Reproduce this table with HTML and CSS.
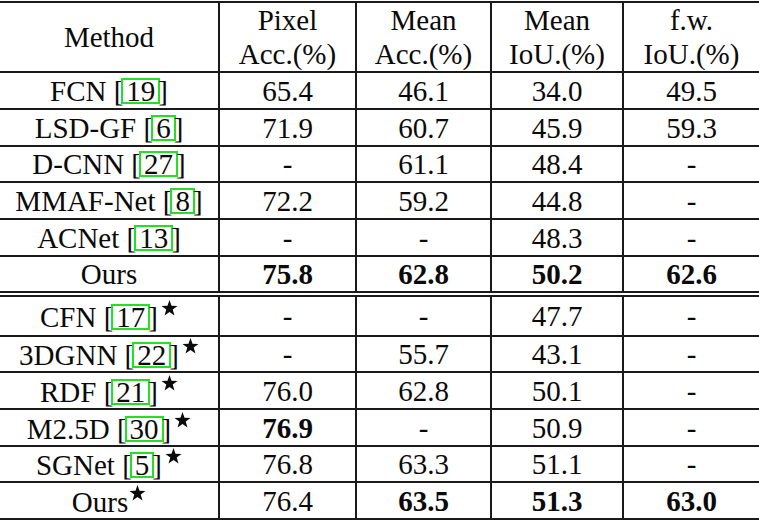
FILE: index.html
```html
<!DOCTYPE html>
<html>
<head>
    <title>Resultados de segmentación</title>
    <link rel="stylesheet" href="styles.css">
</head>
<body>
    <table class="results">
        <colgroup>
            <col class="c-method">
            <col class="c-pix">
            <col class="c-macc">
            <col class="c-miou">
            <col class="c-fw">
        </colgroup>
        <tr class="head">
            <th>Method</th>
            <th>Pixel<br>Acc.(%)</th>
            <th>Mean<br>Acc.(%)</th>
            <th>Mean<br>IoU.(%)</th>
            <th>f.w.<br>IoU.(%)</th>
        </tr>
        <tr>
            <td>FCN [<span class="ref">19</span>]</td>
            <td>65.4</td><td>46.1</td><td>34.0</td><td>49.5</td>
        </tr>
        <tr>
            <td>LSD-GF [<span class="ref">6</span>]</td>
            <td>71.9</td><td>60.7</td><td>45.9</td><td>59.3</td>
        </tr>
        <tr class="short">
            <td>D-CNN [<span class="ref">27</span>]</td>
            <td>-</td><td>61.1</td><td>48.4</td><td>-</td>
        </tr>
        <tr>
            <td>MMAF-Net [<span class="ref">8</span>]</td>
            <td>72.2</td><td>59.2</td><td>44.8</td><td>-</td>
        </tr>
        <tr>
            <td>ACNet [<span class="ref">13</span>]</td>
            <td>-</td><td>-</td><td>48.3</td><td>-</td>
        </tr>
        <tr class="split">
            <td>Ours</td>
            <td><b>75.8</b></td><td><b>62.8</b></td><td><b>50.2</b></td><td><b>62.6</b></td>
        </tr>
        <tr class="tall">
            <td>CFN [<span class="ref">17</span>]<svg class="star" viewBox="0 0 20 19"><path d="M10 0 L12.4 6.9 L19.5 7 L13.8 11.4 L15.9 18.5 L10 14.2 L4.1 18.5 L6.2 11.4 L0.5 7 L7.6 6.9 Z"/></svg></td>
            <td>-</td><td>-</td><td>47.7</td><td>-</td>
        </tr>
        <tr class="short">
            <td>3DGNN [<span class="ref">22</span>]<svg class="star" viewBox="0 0 20 19"><path d="M10 0 L12.4 6.9 L19.5 7 L13.8 11.4 L15.9 18.5 L10 14.2 L4.1 18.5 L6.2 11.4 L0.5 7 L7.6 6.9 Z"/></svg></td>
            <td>-</td><td>55.7</td><td>43.1</td><td>-</td>
        </tr>
        <tr>
            <td>RDF [<span class="ref">21</span>]<svg class="star" viewBox="0 0 20 19"><path d="M10 0 L12.4 6.9 L19.5 7 L13.8 11.4 L15.9 18.5 L10 14.2 L4.1 18.5 L6.2 11.4 L0.5 7 L7.6 6.9 Z"/></svg></td>
            <td>76.0</td><td>62.8</td><td>50.1</td><td>-</td>
        </tr>
        <tr>
            <td>M2.5D [<span class="ref">30</span>]<svg class="star" viewBox="0 0 20 19"><path d="M10 0 L12.4 6.9 L19.5 7 L13.8 11.4 L15.9 18.5 L10 14.2 L4.1 18.5 L6.2 11.4 L0.5 7 L7.6 6.9 Z"/></svg></td>
            <td><b>76.9</b></td><td>-</td><td>50.9</td><td>-</td>
        </tr>
        <tr class="short">
            <td>SGNet [<span class="ref">5</span>]<svg class="star" viewBox="0 0 20 19"><path d="M10 0 L12.4 6.9 L19.5 7 L13.8 11.4 L15.9 18.5 L10 14.2 L4.1 18.5 L6.2 11.4 L0.5 7 L7.6 6.9 Z"/></svg></td>
            <td>76.8</td><td>63.3</td><td>51.1</td><td>-</td>
        </tr>
        <tr>
            <td>Ours<svg class="star tight" viewBox="0 0 20 19"><path d="M10 0 L12.4 6.9 L19.5 7 L13.8 11.4 L15.9 18.5 L10 14.2 L4.1 18.5 L6.2 11.4 L0.5 7 L7.6 6.9 Z"/></svg></td>
            <td>76.4</td><td><b>63.5</b></td><td><b>51.3</b></td><td><b>63.0</b></td>
        </tr>
    </table>
</body>
</html>
```

FILE: styles.css
```css
body {
    margin: 0;
    background: #ffffff;
    color: #0a0a0a;
    font-family: "Liberation Serif", "Times New Roman", serif;
}
.results {
    border-collapse: collapse;
    table-layout: fixed;
    width: 759px;
    margin-top: 1px;
    font-size: 29px;
}
.c-method { width: 219px; }
.c-pix { width: 137px; }
.c-macc { width: 135px; }
.c-miou { width: 132px; }
.c-fw { width: 136px; }
th, td {
    padding: 0;
    text-align: center;
    vertical-align: middle;
    font-weight: normal;
    white-space: nowrap;
    border-top: 2px solid #1a1a1a;
    border-bottom: 2px solid #1a1a1a;
    border-left: 2px solid #1a1a1a;
    height: 35px;
    line-height: 30px;
}
th:first-child, td:first-child {
    border-left: none;
}
.head th {
    height: 68px;
    line-height: 34px;
}
.short td {
    height: 34px;
}
.tall td {
    height: 38px;
}
.split td {
    height: 34px;
    border-bottom: 6px double #1a1a1a;
}
b {
    font-weight: bold;
}
.ref {
    display: inline-block;
    line-height: 20px;
    padding: 1px 3px;
    margin: 0 -2px;
    border: 2px solid #22e022;
}
.star {
    width: 17px;
    height: 16px;
    margin-left: 3px;
    vertical-align: 11px;
    fill: #0a0a0a;
}
.star.tight {
    margin-left: 1px;
}
```
